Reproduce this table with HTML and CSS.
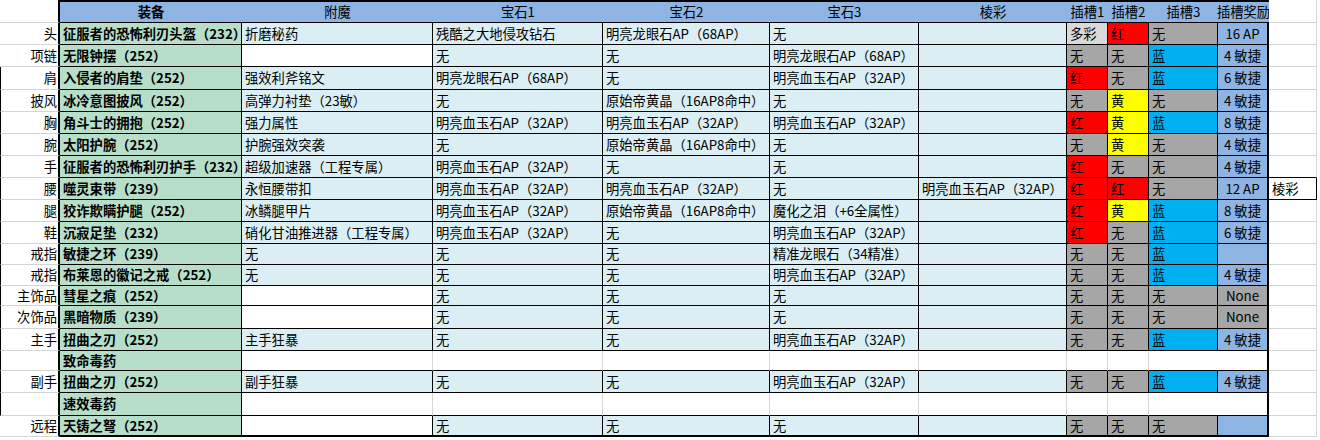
FILE: index.html
```html
<!DOCTYPE html>
<html lang="zh-CN">
<head>
<meta charset="utf-8">
<title>装备</title>
<link rel="stylesheet" href="styles.css">
</head>
<body>
<div class="sheet">
  <!-- header -->
  <div class="c lbl hlbl"></div>
  <div class="c hd b">装备</div>
  <div class="c hd">附魔</div>
  <div class="c hd">宝石1</div>
  <div class="c hd">宝石2</div>
  <div class="c hd">宝石3</div>
  <div class="c hd">棱彩</div>
  <div class="c hd">插槽1</div>
  <div class="c hd">插槽2</div>
  <div class="c hd">插槽3</div>
  <div class="c hd hdlast">插槽奖励</div>
  <div class="c x"></div>

  <!-- 头 -->
  <div class="c lbl">头</div>
  <div class="c item">征服者的恐怖利刃头盔（232）</div>
  <div class="c lb">折磨秘药</div>
  <div class="c lb">残酷之大地侵攻钻石</div>
  <div class="c lb">明亮龙眼石AP（68AP）</div>
  <div class="c lb">无</div>
  <div class="c lb"></div>
  <div class="c s-multi">多彩</div>
  <div class="c s-red">红</div>
  <div class="c s-grey">无</div>
  <div class="c rw">16 AP</div>
  <div class="c x"></div>

  <!-- 项链 -->
  <div class="c lbl">项链</div>
  <div class="c item">无限钟摆（252）</div>
  <div class="c w"></div>
  <div class="c lb">无</div>
  <div class="c lb">无</div>
  <div class="c lb">明亮龙眼石AP（68AP）</div>
  <div class="c lb"></div>
  <div class="c s-grey">无</div>
  <div class="c s-grey">无</div>
  <div class="c s-blue">蓝</div>
  <div class="c rw">4 敏捷</div>
  <div class="c x"></div>

  <!-- 肩 -->
  <div class="c lbl edge">肩</div>
  <div class="c item">入侵者的肩垫（252）</div>
  <div class="c lb">强效利斧铭文</div>
  <div class="c lb">明亮龙眼石AP（68AP）</div>
  <div class="c lb">无</div>
  <div class="c lb">明亮血玉石AP（32AP）</div>
  <div class="c lb"></div>
  <div class="c s-red">红</div>
  <div class="c s-grey">无</div>
  <div class="c s-blue">蓝</div>
  <div class="c rw">6 敏捷</div>
  <div class="c x"></div>

  <!-- 披风 -->
  <div class="c lbl edge">披风</div>
  <div class="c item">冰冷意图披风（252）</div>
  <div class="c lb">高弹力衬垫（23敏）</div>
  <div class="c lb">无</div>
  <div class="c lb">原始帝黄晶（16AP8命中）</div>
  <div class="c lb">无</div>
  <div class="c lb"></div>
  <div class="c s-grey">无</div>
  <div class="c s-yellow">黄</div>
  <div class="c s-grey">无</div>
  <div class="c rw">4 敏捷</div>
  <div class="c x"></div>

  <!-- 胸 -->
  <div class="c lbl edge">胸</div>
  <div class="c item">角斗士的拥抱（252）</div>
  <div class="c lb">强力属性</div>
  <div class="c lb">明亮血玉石AP（32AP）</div>
  <div class="c lb">明亮血玉石AP（32AP）</div>
  <div class="c lb">明亮血玉石AP（32AP）</div>
  <div class="c lb"></div>
  <div class="c s-red">红</div>
  <div class="c s-yellow">黄</div>
  <div class="c s-blue">蓝</div>
  <div class="c rw">8 敏捷</div>
  <div class="c x"></div>

  <!-- 腕 -->
  <div class="c lbl edge">腕</div>
  <div class="c item">太阳护腕（252）</div>
  <div class="c lb">护腕强效突袭</div>
  <div class="c lb">无</div>
  <div class="c lb">原始帝黄晶（16AP8命中）</div>
  <div class="c lb">无</div>
  <div class="c lb"></div>
  <div class="c s-grey">无</div>
  <div class="c s-yellow">黄</div>
  <div class="c s-grey">无</div>
  <div class="c rw">4 敏捷</div>
  <div class="c x"></div>

  <!-- 手 -->
  <div class="c lbl edge">手</div>
  <div class="c item">征服者的恐怖利刃护手（232）</div>
  <div class="c lb">超级加速器（工程专属）</div>
  <div class="c lb">明亮血玉石AP（32AP）</div>
  <div class="c lb">无</div>
  <div class="c lb">无</div>
  <div class="c lb"></div>
  <div class="c s-red">红</div>
  <div class="c s-grey">无</div>
  <div class="c s-grey">无</div>
  <div class="c rw">4 敏捷</div>
  <div class="c x xabove"></div>

  <!-- 腰 -->
  <div class="c lbl edge">腰</div>
  <div class="c item">噬灵束带（239）</div>
  <div class="c lb">永恒腰带扣</div>
  <div class="c lb">明亮血玉石AP（32AP）</div>
  <div class="c lb">明亮血玉石AP（32AP）</div>
  <div class="c lb">无</div>
  <div class="c lb">明亮血玉石AP（32AP）</div>
  <div class="c s-red">红</div>
  <div class="c s-red">红</div>
  <div class="c s-grey">无</div>
  <div class="c rw">12 AP</div>
  <div class="c x xbox">棱彩</div>

  <!-- 腿 -->
  <div class="c lbl edge">腿</div>
  <div class="c item">狡诈欺瞒护腿（252）</div>
  <div class="c lb">冰鳞腿甲片</div>
  <div class="c lb">明亮血玉石AP（32AP）</div>
  <div class="c lb">原始帝黄晶（16AP8命中）</div>
  <div class="c lb">魔化之泪（+6全属性）</div>
  <div class="c lb"></div>
  <div class="c s-red">红</div>
  <div class="c s-yellow">黄</div>
  <div class="c s-blue">蓝</div>
  <div class="c rw">8 敏捷</div>
  <div class="c x"></div>

  <!-- 鞋 -->
  <div class="c lbl edge">鞋</div>
  <div class="c item">沉寂足垫（232）</div>
  <div class="c lb">硝化甘油推进器（工程专属）</div>
  <div class="c lb">明亮血玉石AP（32AP）</div>
  <div class="c lb">无</div>
  <div class="c lb">明亮血玉石AP（32AP）</div>
  <div class="c lb"></div>
  <div class="c s-red">红</div>
  <div class="c s-grey">无</div>
  <div class="c s-blue">蓝</div>
  <div class="c rw">6 敏捷</div>
  <div class="c x"></div>

  <!-- 戒指 -->
  <div class="c lbl edge">戒指</div>
  <div class="c item">敏捷之环（239）</div>
  <div class="c lb">无</div>
  <div class="c lb">无</div>
  <div class="c lb">无</div>
  <div class="c lb">精准龙眼石（34精准）</div>
  <div class="c lb"></div>
  <div class="c s-grey">无</div>
  <div class="c s-grey">无</div>
  <div class="c s-blue">蓝</div>
  <div class="c rw"></div>
  <div class="c x"></div>

  <!-- 戒指 -->
  <div class="c lbl edge">戒指</div>
  <div class="c item">布莱恩的徽记之戒（252）</div>
  <div class="c lb">无</div>
  <div class="c lb">无</div>
  <div class="c lb">无</div>
  <div class="c lb">明亮血玉石AP（32AP）</div>
  <div class="c lb"></div>
  <div class="c s-grey">无</div>
  <div class="c s-grey">无</div>
  <div class="c s-blue">蓝</div>
  <div class="c rw">4 敏捷</div>
  <div class="c x"></div>

  <!-- 主饰品 -->
  <div class="c lbl edge">主饰品</div>
  <div class="c item">彗星之痕（252）</div>
  <div class="c w"></div>
  <div class="c lb">无</div>
  <div class="c lb">无</div>
  <div class="c lb">无</div>
  <div class="c lb"></div>
  <div class="c s-grey">无</div>
  <div class="c s-grey">无</div>
  <div class="c s-grey">无</div>
  <div class="c rw none">None</div>
  <div class="c x"></div>

  <!-- 次饰品 -->
  <div class="c lbl edge">次饰品</div>
  <div class="c item">黑暗物质（239）</div>
  <div class="c w"></div>
  <div class="c lb">无</div>
  <div class="c lb">无</div>
  <div class="c lb">无</div>
  <div class="c lb"></div>
  <div class="c s-grey">无</div>
  <div class="c s-grey">无</div>
  <div class="c s-grey">无</div>
  <div class="c rw none">None</div>
  <div class="c x"></div>

  <!-- 主手 -->
  <div class="c lbl edge">主手</div>
  <div class="c item">扭曲之刃（252）</div>
  <div class="c lb">主手狂暴</div>
  <div class="c lb">无</div>
  <div class="c lb">无</div>
  <div class="c lb">明亮血玉石AP（32AP）</div>
  <div class="c lb"></div>
  <div class="c s-grey">无</div>
  <div class="c s-grey">无</div>
  <div class="c s-blue">蓝</div>
  <div class="c rw">4 敏捷</div>
  <div class="c x"></div>

  <!-- 致命毒药 -->
  <div class="c lbl edge"></div>
  <div class="c item">致命毒药</div>
  <div class="c pz"></div>
  <div class="c pz"></div>
  <div class="c pz"></div>
  <div class="c pz"></div>
  <div class="c pz"></div>
  <div class="c pz"></div>
  <div class="c pz"></div>
  <div class="c pz pzopen"></div>
  <div class="c pz pzend"></div>
  <div class="c x"></div>

  <!-- 副手 -->
  <div class="c lbl edge">副手</div>
  <div class="c item">扭曲之刃（252）</div>
  <div class="c lb">副手狂暴</div>
  <div class="c lb">无</div>
  <div class="c lb">无</div>
  <div class="c lb">明亮血玉石AP（32AP）</div>
  <div class="c lb"></div>
  <div class="c s-grey">无</div>
  <div class="c s-grey">无</div>
  <div class="c s-blue">蓝</div>
  <div class="c rw">4 敏捷</div>
  <div class="c x"></div>

  <!-- 速效毒药 -->
  <div class="c lbl edge"></div>
  <div class="c item">速效毒药</div>
  <div class="c pz"></div>
  <div class="c pz"></div>
  <div class="c pz"></div>
  <div class="c pz"></div>
  <div class="c pz"></div>
  <div class="c pz"></div>
  <div class="c pz"></div>
  <div class="c pz pzopen"></div>
  <div class="c pz pzend"></div>
  <div class="c x"></div>

  <!-- 远程 -->
  <div class="c lbl">远程</div>
  <div class="c item last">天铸之弩（252）</div>
  <div class="c w last"></div>
  <div class="c lb last">无</div>
  <div class="c lb last">无</div>
  <div class="c lb last">无</div>
  <div class="c lb last"></div>
  <div class="c s-grey last">无</div>
  <div class="c s-grey last">无</div>
  <div class="c s-grey last">无</div>
  <div class="c rw last"></div>
  <div class="c x"></div>
</div>
</body>
</html>
```
FILE: styles.css
```css
* { box-sizing: border-box; }

html, body {
  margin: 0;
  padding: 0;
  background: #ffffff;
}

body {
  font-family: "Noto Sans CJK SC", "Microsoft YaHei", sans-serif;
  font-size: 13.3px;
  color: #000000;
}

.sheet {
  display: grid;
  grid-template-columns: 60px 182px 191px 170px 167px 149px 148px 41px 41px 69px 51px 48px;
  grid-template-rows: 23px 22px 22px 23px 22px 22px 22px 22px 22px 22px 22px 21px 21px 20px 23px 22px 20px 22px 23px 21px;
  width: 1317px;
}

.c {
  display: flex;
  align-items: center;
  padding: 0 3px;
  white-space: nowrap;
  line-height: 1;
  border-right: 1px solid #000;
  border-bottom: 1px solid #000;
  min-width: 0;
}

/* row label column */
.lbl {
  justify-content: flex-end;
  padding: 0 1px 0 0;
  background: #ffffff;
  border-right: 2px solid #000;
  border-bottom: 1px solid #d4d4d4;
}
.lbl.edge { border-left: 1px solid #000; }

/* header */
.hd {
  justify-content: center;
  background: #8db4e2;
  border-top: 2px solid #000;
  border-right: none;
  padding: 0;
}
.hd.b { font-weight: bold; }
.hdlast { overflow: visible; }

/* item column */
.item {
  background: #b7dec9;
  font-weight: bold;
}

.lb { background: #daeef3; }
.w { background: #ffffff; }

/* slots */
.s-grey { background: #a6a6a6; }
.s-multi { background: #d9d9d9; }
.s-red { background: #ff0000; }
.s-yellow { background: #ffff00; }
.s-blue { background: #00b0f0; }

/* slot reward */
.rw {
  justify-content: center;
  background: #8db4e2;
  border-right: 2px solid #000;
}
.rw.none { background: #a6a6a6; }

/* extra spreadsheet column */
.x {
  background: #ffffff;
  border-right: 1px solid #d4d4d4;
  border-bottom: 1px solid #d4d4d4;
}
.x.xabove { border-bottom: 1px solid #000; }
.x.xbox {
  border-right: 1px solid #000;
  border-bottom: 1px solid #000;
}

/* poison rows */
.pz {
  background: #ffffff;
  border-right: 1px solid #d4d4d4;
}
.pz.pzopen { border-right: none; }
.pz.pzend { border-right: 2px solid #000; }

.last { border-bottom: 2px solid #000; }
```
